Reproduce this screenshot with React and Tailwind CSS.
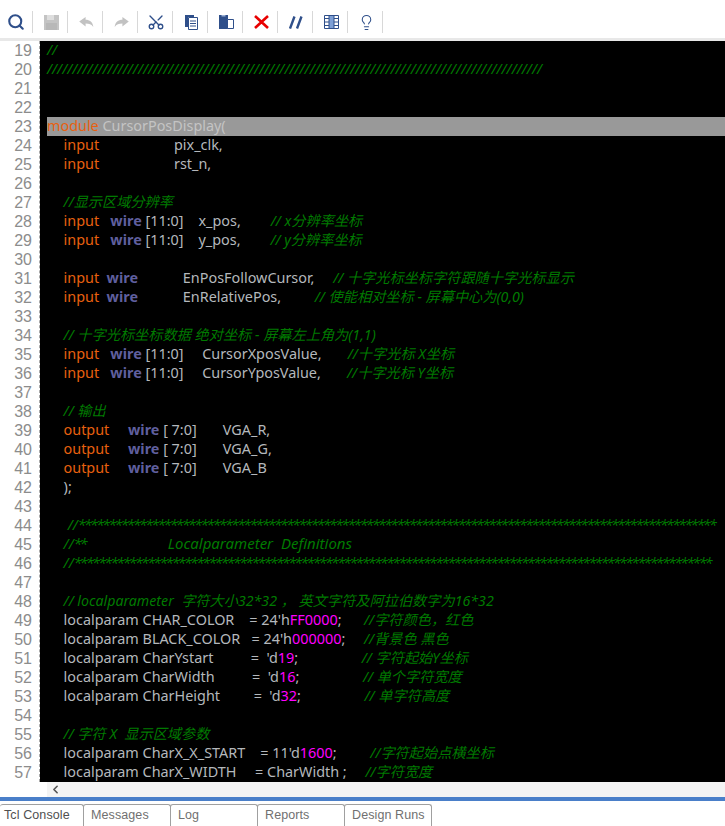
import { Search, Scissors, Lightbulb, ChevronLeft } from "lucide-react";

const cls = {
  k: "text-[#e8600f]",
  w: "text-[#5f5f9e] font-bold",
  c: "text-[#007a00] italic text-[14.200px]",
  s: "text-[#007a00] italic text-[14.200px] tracking-[-1.690px]",
  l: "text-[#007a00] italic text-[15px]",
  n: "text-[#ff00ff]",
  t: "text-[#b4b8bc]",
  i: "tracking-[0.4px]",
};

const I = ["i", "    "];

const lines = [
  [["c", "//"]],
  [["c", "/".repeat(98)]],
  [],
  [],
  "module",
  [I, ["k", "input"], ["t", "                    pix_clk,"]],
  [I, ["k", "input"], ["t", "                    rst_n,"]],
  [],
  [I, ["c", "//显示区域分辨率"]],
  [I, ["k", "input"], ["t", "   "], ["w", "wire"], ["t", " [11:0]    x_pos,        "], ["c", "// x分辨率坐标"]],
  [I, ["k", "input"], ["t", "   "], ["w", "wire"], ["t", " [11:0]    y_pos,        "], ["c", "// y分辨率坐标"]],
  [],
  [I, ["k", "input"], ["t", "  "], ["w", "wire"], ["t", "            EnPosFollowCursor,     "], ["c", "// 十字光标坐标字符跟随十字光标显示"]],
  [I, ["k", "input"], ["t", "  "], ["w", "wire"], ["t", "            EnRelativePos,         "], ["c", "// 使能相对坐标 - 屏幕中心为(0,0)"]],
  [],
  [I, ["c", "// 十字光标坐标数据 绝对坐标 - 屏幕左上角为(1,1)"]],
  [I, ["k", "input"], ["t", "   "], ["w", "wire"], ["t", " [11:0]     CursorXposValue,       "], ["c", "//十字光标 X坐标"]],
  [I, ["k", "input"], ["t", "   "], ["w", "wire"], ["t", " [11:0]     CursorYposValue,       "], ["c", "//十字光标 Y坐标"]],
  [],
  [I, ["c", "// 输出"]],
  [I, ["k", "output"], ["t", "     "], ["w", "wire"], ["t", " [ 7:0]       VGA_R,"]],
  [I, ["k", "output"], ["t", "     "], ["w", "wire"], ["t", " [ 7:0]       VGA_G,"]],
  [I, ["k", "output"], ["t", "     "], ["w", "wire"], ["t", " [ 7:0]       VGA_B"]],
  [I, ["t", ");"]],
  [],
  [["i", "     "], ["c", "//"], ["s", "*".repeat(104)]],
  [I, ["c", "//"], ["s", "**"], ["l", "                     Localparameter  Definitions"]],
  [I, ["c", "//"], ["s", "*".repeat(104)]],
  [],
  [I, ["c", "// localparameter  字符大小32*32 ， 英文字符及阿拉伯数字为16*32"]],
  [I, ["t", "localparam CHAR_COLOR    = 24'h"], ["n", "FF0000"], ["t", ";      "], ["c", "//字符颜色，红色"]],
  [I, ["t", "localparam BLACK_COLOR   = 24'h"], ["n", "000000"], ["t", ";     "], ["c", "//背景色 黑色"]],
  [I, ["t", "localparam CharYstart          =  'd"], ["n", "19"], ["t", ";                 "], ["c", "// 字符起始Y坐标"]],
  [I, ["t", "localparam CharWidth          =  'd"], ["n", "16"], ["t", ";                 "], ["c", "// 单个字符宽度"]],
  [I, ["t", "localparam CharHeight         =  'd"], ["n", "32"], ["t", ";                 "], ["c", "// 单字符高度"]],
  [],
  [I, ["c", "// 字符 X  显示区域参数"]],
  [I, ["t", "localparam CharX_X_START    = 11'd"], ["n", "1600"], ["t", ";         "], ["c", "//字符起始点横坐标"]],
  [I, ["t", "localparam CharX_WIDTH     = CharWidth ;     "], ["c", "//字符宽度"]],
];

const Sep = () => <span className="w-px h-[22px] bg-[#d8d8d8]" />;

// icons that lucide has no match for
const Save = () => (
  <svg width="15" height="15" viewBox="0 0 15 15">
    <path d="M0 0h15v15H0z" fill="#c4c4c4" />
    <path d="M3 0h7v5H3z" fill="#dedede" />
    <path d="M2 8h11v7H2z" fill="#b8b8b8" />
  </svg>
);

const Arrow = ({ flip }) => (
  <svg width="15" height="10" viewBox="0 0 16 11" className={flip ? "-scale-x-100" : ""}>
    <path d="M0 5 7 0v3c4.500 0 8 2.500 8.500 8C13.500 8 11 7.200 7 7.200V10.500z" fill="#c2c2c2" />
  </svg>
);

const Copy = () => (
  <svg width="13" height="15" viewBox="0 0 13 15">
    <path d="M0 0h9v2H3v10H0z" fill="#2f4f8a" />
    <path d="M3.500 2.500h9v12h-9z" fill="#fff" stroke="#2f4f8a" />
    <path d="M5 6h6M5 8.500h6M5 11h6" stroke="#2f4f8a" />
  </svg>
);

const Paste = () => (
  <svg width="15" height="14" viewBox="0 0 15 14">
    <path d="M0 0h9v14H0z" fill="#2f4f8a" />
    <path d="M2.500 0h4v1.500h-4z" fill="#9fb3d6" />
    <path d="M8.500 4.500h6v9h-6z" fill="#fff" stroke="#2f4f8a" />
  </svg>
);

const Cross = () => (
  <svg width="15" height="14" viewBox="0 0 15 14">
    <path d="M1 1l13 12M14 1 1 13" stroke="#e80000" strokeWidth="2.600" />
  </svg>
);

const Slashes = () => (
  <svg width="14" height="13" viewBox="0 0 14 13">
    <path d="M5.500 0.500 1 12.500M12.500 0.500 8 12.500" stroke="#2f4f8a" strokeWidth="2.400" />
  </svg>
);

const Film = () => (
  <svg width="15" height="14" viewBox="0 0 15 14">
    <path d="M5 1h5v12H5z" fill="#7d9fd6" />
    <path d="M.5.500h14v13H.5zM5 .5v13M10 .5v13M.5 3.500H5M.5 7H5M.5 10.500H5M10 3.500h4.500M10 7h4.500M10 10.500h4.500" fill="none" stroke="#2f4f8a" />
  </svg>
);

const tools = [
  <Search size={18} color="#2f4f8a" strokeWidth={2.800} />,
  <Save />,
  <Arrow />,
  <Arrow flip />,
  <Scissors size={18} color="#2f4f8a" strokeWidth={1.800} className="-rotate-90" />,
  <Copy />,
  <Paste />,
  <Cross />,
  <Slashes />,
  <Film />,
  <Lightbulb size={17} color="#2f4f8a" strokeWidth={1.500} />,
];

const tabs = [
  ["Tcl Console", "w-[84px] border-l-0 text-[#505050]", "pl-1"],
  ["Messages", "w-[88px] text-[#707070]", "pl-[7px]"],
  ["Log", "w-[88px] text-[#707070]", "pl-[7px]"],
  ["Reports", "w-[88px] text-[#707070]", "pl-[7px]"],
  ["Design Runs", "w-[88px] text-[#707070]", "pl-[7px]"],
];

export default function App() {
  return (
    <div className="w-[725px] h-[826px] overflow-hidden bg-white flex flex-col font-['Liberation_Sans','Noto_Sans_CJK_SC',sans-serif]">
      <div className="h-[38px] shrink-0 flex items-center pt-[6px]">
        {tools.map((icon, i) => (
          <div key={i} className="flex items-center">
            <span className="w-[32px] h-[22px] flex items-center justify-center">{icon}</span>
            <Sep />
            <span className="w-[2px]" />
          </div>
        ))}
      </div>
      <div className="h-[3px] shrink-0 bg-[#e8e8e8]" />
      <div className="h-[741px] shrink-0 flex overflow-hidden">
        <div className="w-[40px] shrink-0 border-r border-dashed border-[#a8a8a8] text-[16px] leading-[19px] text-[#8c8c8c] text-right pr-[7px]">
          {lines.map((_, i) => (
            <div key={i} className="h-[19px]">{i + 19}</div>
          ))}
        </div>
        <div className="flex-1 min-w-0 bg-black pl-[7px] font-['Noto_Sans','Noto_Sans_CJK_SC',sans-serif] text-[14.400px] leading-[17px] whitespace-pre overflow-hidden">
          {lines.map((line, i) =>
            line === "module" ? (
              <div key={i} className="h-[19px] bg-[#999999]">
                <span className={cls.k}>module </span>
                <span className="text-[#c4c4c4]">CursorPosDisplay(</span>
              </div>
            ) : (
              <div key={i} className="h-[19px]">
                {line.map(([type, text], j) => (
                  <span key={j} className={cls[type]}>{text}</span>
                ))}
              </div>
            )
          )}
        </div>
      </div>
      <div className="h-[15px] shrink-0 pl-[47px] flex">
        <div className="flex-1 bg-[#f4f4f4] flex items-center pl-[2px]">
          <ChevronLeft size={13} color="#555555" strokeWidth={3} />
        </div>
      </div>
      <div className="h-[4px] shrink-0 bg-[#4a7fc9]" />
      <div className="flex-1 flex items-end">
        {tabs.map(([label, box, pad]) => (
          <div key={label} className={`h-[22px] -mr-px border border-b-0 border-[#a0a0a0] rounded-t-[3px] text-[12.500px] tracking-[0.1px] leading-[20px] ${box} ${pad}`}>
            {label}
          </div>
        ))}
      </div>
    </div>
  );
}
